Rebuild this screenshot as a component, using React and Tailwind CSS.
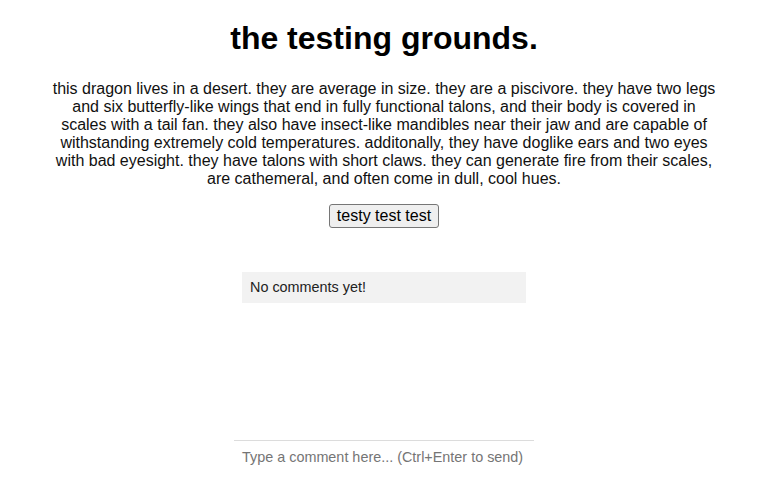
export default function App() {
  return (
    <div className="h-screen flex flex-col items-center bg-white text-black font-['Liberation_Sans',Arial,sans-serif]">
      <h1 className="mt-[20px] text-[32px] leading-[37px] font-bold">the testing grounds.</h1>
      <p className="mt-[23px] w-[672px] text-center text-base leading-[18px] text-[#111]">
        this dragon lives in a desert. they are average in size. they are a piscivore. they have two legs and six butterfly-like wings that end in fully functional talons, and their body is covered in scales with a tail fan. they also have insect-like mandibles near their jaw and are capable of withstanding extremely cold temperatures. additonally, they have doglike ears and two eyes with bad eyesight. they have talons with short claws. they can generate fire from their scales, are cathemeral, and often come in dull, cool hues.
      </p>
      <button className="mt-[16px] h-6 px-[7px] bg-[#efefef] border border-[#767676] rounded-[3px] text-base leading-[18px] text-black">
        testy test test
      </button>
      <div className="mt-[44px] w-[284px] h-[31px] px-2 flex items-center bg-[#f2f2f2] text-[14.4px] text-[#222]">
        No comments yet!
      </div>
      <textarea
        className="mt-auto w-[300px] h-10 px-2 pt-[7px] border-t border-[#dcdcdc] outline-none resize-none text-[14.4px] leading-[18px] placeholder:text-[#757575]"
        placeholder="Type a comment here... (Ctrl+Enter to send)"
      />
    </div>
  )
}
